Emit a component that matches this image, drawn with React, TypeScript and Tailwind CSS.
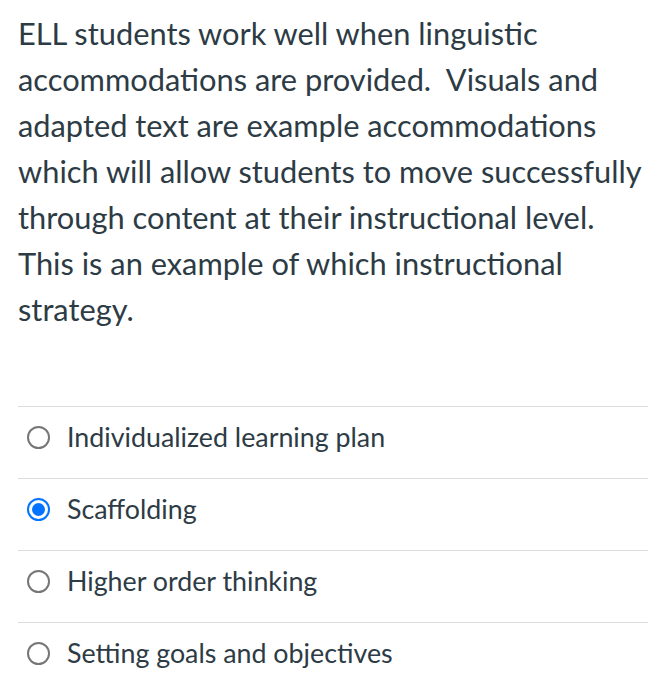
const OPTIONS = [
  "Individualized learning plan",
  "Scaffolding",
  "Higher order thinking",
  "Setting goals and objectives",
];

function Radio({ checked }: { checked: boolean }) {
  if (checked) {
    return (
      <span className="flex h-[23px] w-[23px] shrink-0 items-center justify-center rounded-full border-[2px] border-[#0374ff] bg-white">
        <span className="h-[13px] w-[13px] rounded-full bg-[#0374ff]" />
      </span>
    );
  }
  return (
    <span className="h-[23px] w-[23px] shrink-0 rounded-full border-[2px] border-[#767676] bg-white" />
  );
}

export default function App() {
  return (
    <div className="min-h-[700px] bg-white pl-[18px] pr-[11px] pt-[11px] font-['Lato','Noto_Sans',sans-serif] text-[#2d3b45]">
      <p className="text-[30.8px] leading-[46px]">
        ELL students work well when linguistic accommodations are provided.&nbsp; Visuals and adapted text are example accommodations which will allow students to move successfully through content at their instructional level.&nbsp; This is an example of which instructional strategy.
      </p>
      <div className="mt-[73px]">
        {OPTIONS.map((o, i) => (
          <div
            key={o}
            className="flex h-[72px] items-center gap-[17px] border-t border-[#dcdcdc] pb-[11px] pl-[9px]"
          >
            <Radio checked={i === 1} />
            <span className="text-[26.8px] leading-[32px]">{o}</span>
          </div>
        ))}
      </div>
    </div>
  );
}
